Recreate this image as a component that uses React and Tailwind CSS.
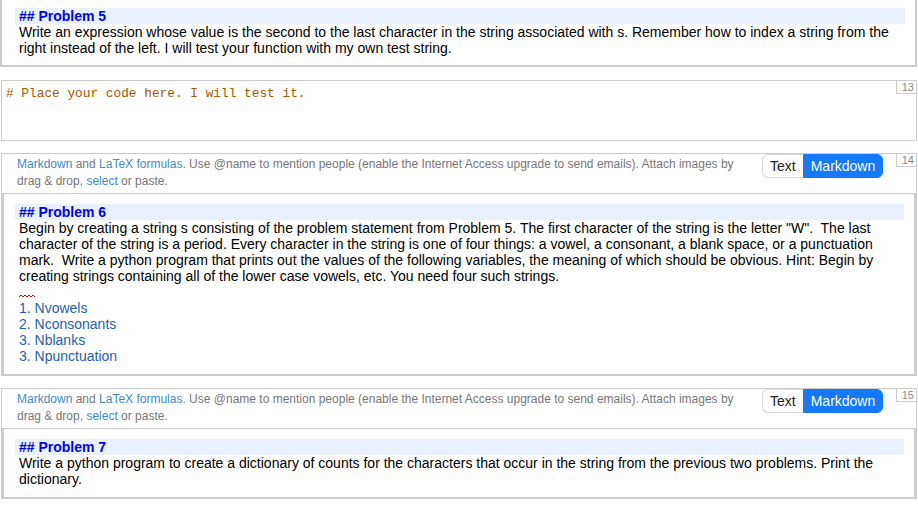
const font = { fontFamily: '"Liberation Sans", Arial, sans-serif' }

function Heading({ children }) {
  return (
    <div className="bg-[#e8f1fd] pl-1 h-4 leading-4 font-bold text-[#0000ff]">{children}</div>
  )
}

function Lines({ lines, className = '' }) {
  return lines.map((l, i) => (
    <div key={i} className={'pl-1 h-4 leading-4 whitespace-pre ' + className}>
      {l}
    </div>
  ))
}

function CellNumber({ n }) {
  return (
    <div className="absolute top-0 right-0 w-[20px] h-[13px] border-l border-b border-[#ccc] bg-white text-[11px] leading-[12px] text-right pr-[2px] text-[#888]">
      {n}
    </div>
  )
}

function MarkdownHeader() {
  return (
    <div className="flex h-[39px] pl-[15px]">
      <div className="w-[729px] text-[12px] leading-[17px] text-[#777] pt-[2px]">
        <span className="text-[#428bca]">Markdown</span> and{' '}
        <span className="text-[#428bca]">LaTeX formulas</span>. Use @name to mention people (enable
        the Internet Access upgrade to send emails). Attach images by drag &amp; drop,{' '}
        <span className="text-[#428bca]">select</span> or paste.
      </div>
      <div className="ml-[16px] flex h-6 text-[14px] leading-[22px]">
        <div className="px-[7px] border border-[#d9d9d9] border-r-0 rounded-l-[6px] text-[#222] bg-white">
          Text
        </div>
        <div className="px-[7px] border border-[#1677ff] bg-[#1677ff] text-white rounded-r-[6px]">
          Markdown
        </div>
      </div>
    </div>
  )
}

function Squiggle() {
  return (
    <svg width="16" height="4" viewBox="0 0 16 4" className="block">
      <path d="M0 3 L2 1 L4 3 L6 1 L8 3 L10 1 L12 3 L14 1 L16 3" fill="none" stroke="#d00" strokeWidth="1" />
    </svg>
  )
}

export default function App() {
  return (
    <div className="w-[918px] h-[505px] bg-white overflow-hidden text-[14px] text-black" style={font}>
      {/* Problem 5 (editing) */}
      <div className="w-[917px] border-x-2 border-b-2 border-[#ccc] pt-2 pb-[9px] pl-[13px] pr-[10px]">
        <Heading>## Problem 5</Heading>
        <Lines
          lines={[
            'Write an expression whose value is the second to the last character in the string associated with s. Remember how to index a string from the',
            'right instead of the left. I will test your function with my own test string.',
          ]}
        />
      </div>

      {/* code cell 13 */}
      <div className="relative ml-px w-[916px] h-[61px] mt-[13px] border border-[#ccc] pl-[4px] pt-[4px]">
        <div
          className="text-[12.8px] leading-[17px] text-[#aa5500] whitespace-pre"
          style={{ fontFamily: '"Liberation Mono", "DejaVu Sans Mono", monospace' }}
        >
          # Place your code here. I will test it.
        </div>
        <CellNumber n="13" />
      </div>

      {/* markdown cell 14 */}
      <div className="relative ml-px w-[916px] mt-[12px] border border-[#ccc]">
        <MarkdownHeader />
        <div className="border-t border-x-2 border-b border-[#ccc] pt-[10px] pb-[10px] pl-[11px] pr-[10px]">
          <Heading>## Problem 6</Heading>
          <Lines
            lines={[
              'Begin by creating a string s consisting of the problem statement from Problem 5. The first character of the string is the letter "W".  The last',
              'character of the string is a period. Every character in the string is one of four things: a vowel, a consonant, a blank space, or a punctuation',
              'mark.  Write a python program that prints out the values of the following variables, the meaning of which should be obvious. Hint: Begin by',
              'creating strings containing all of the lower case vowels, etc. You need four such strings.',
            ]}
          />
          <div className="pl-1 h-4 flex items-end pb-[2px]">
            <Squiggle />
          </div>
          <Lines
            className="text-[#1f5fae]"
            lines={['1. Nvowels', '2. Nconsonants', '3. Nblanks', '3. Npunctuation']}
          />
        </div>
        <CellNumber n="14" />
      </div>

      {/* markdown cell 15 */}
      <div className="relative ml-px w-[916px] mt-[12px] border border-[#ccc]">
        <MarkdownHeader />
        <div className="border-t border-x-2 border-b border-[#ccc] pt-[10px] pb-[10px] pl-[11px] pr-[10px]">
          <Heading>## Problem 7</Heading>
          <Lines
            lines={[
              'Write a python program to create a dictionary of counts for the characters that occur in the string from the previous two problems. Print the',
              'dictionary.',
            ]}
          />
        </div>
        <CellNumber n="15" />
      </div>
    </div>
  )
}
